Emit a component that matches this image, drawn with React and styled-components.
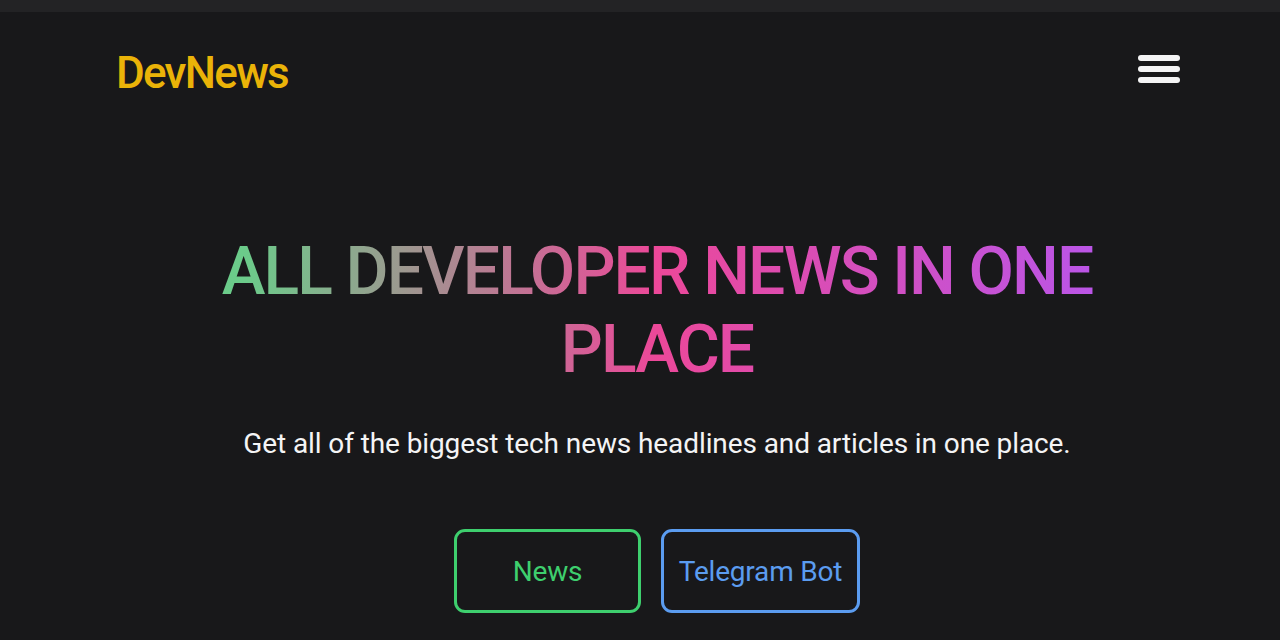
import styled, { createGlobalStyle } from "styled-components";

const GlobalStyle = createGlobalStyle`
  * { box-sizing: border-box; }
  body {
    margin: 0;
    background: #18181a;
    font-family: Roboto, "Liberation Sans", sans-serif;
  }
`;

const TopStrip = styled.div`
  height: 12px;
  background: #232325;
`;

const Page = styled.div`
  min-height: 628px;
  background: #18181a;
  display: flex;
  flex-direction: column;
`;

const Header = styled.header`
  display: flex;
  justify-content: space-between;
  align-items: center;
  padding: 35px 100px 0 116px;
`;

const Logo = styled.div`
  font-size: 44px;
  font-weight: 500;
  color: #eab308;
  letter-spacing: -1.7px;
`;

const MenuButton = styled.button`
  background: none;
  border: none;
  padding: 0;
  margin-bottom: 8px;
  display: flex;
  flex-direction: column;
  gap: 5px;
  cursor: pointer;
`;

const Bar = styled.span`
  display: block;
  width: 42px;
  height: 6px;
  border-radius: 3px;
  background: #f4f4f5;
`;

const Hero = styled.main`
  display: flex;
  flex-direction: column;
  align-items: center;
  padding: 134px 0 0 34px;
`;

const Title = styled.h1`
  margin: 0;
  width: 900px;
  text-align: center;
  font-size: 66px;
  font-weight: 500;
  line-height: 78px;
  letter-spacing: -1.9px;
  background: linear-gradient(90deg, #6bcb8a 4%, #ec4899 50%, #bb55e6 98%);
  -webkit-background-clip: text;
  background-clip: text;
  color: transparent;
`;

const Subtitle = styled.p`
  margin: 38px 0 0;
  font-size: 28px;
  color: #f4f4f5;
  letter-spacing: -0.1px;
`;

const Actions = styled.div`
  display: flex;
  gap: 20px;
  margin-top: 69px;
`;

const LinkButton = styled.a`
  display: flex;
  align-items: center;
  justify-content: center;
  height: 84px;
  width: ${(p) => p.$w}px;
  border: 3px solid ${(p) => p.$color};
  border-radius: 11px;
  color: ${(p) => p.$color};
  font-size: 28px;
  letter-spacing: -0.2px;
  text-decoration: none;
`;

export default function App() {
  return (
    <>
      <GlobalStyle />
      <TopStrip />
      <Page>
        <Header>
          <Logo>DevNews</Logo>
          <MenuButton aria-label="menu">
            <Bar />
            <Bar />
            <Bar />
          </MenuButton>
        </Header>
        <Hero>
          <Title>ALL DEVELOPER NEWS IN ONE PLACE</Title>
          <Subtitle>
            Get all of the biggest tech news headlines and articles in one place.
          </Subtitle>
          <Actions>
            <LinkButton href="#" $color="#3ecf6e" $w={187}>
              News
            </LinkButton>
            <LinkButton href="#" $color="#5b9cf0" $w={199}>
              Telegram Bot
            </LinkButton>
          </Actions>
        </Hero>
      </Page>
    </>
  );
}
